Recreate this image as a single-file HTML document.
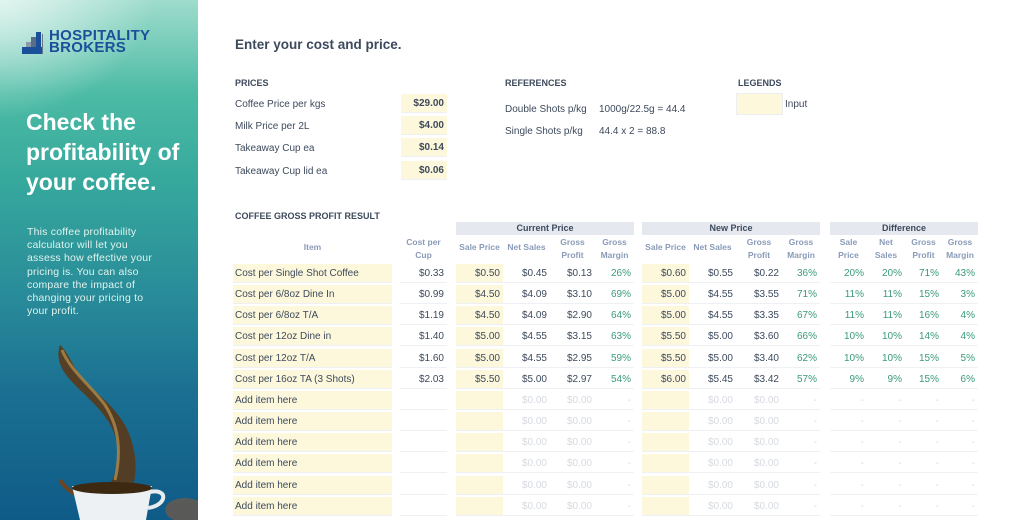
<!DOCTYPE html>
<html><head><meta charset="utf-8"><style>
*{margin:0;padding:0;box-sizing:border-box}
body{width:1024px;height:520px;overflow:hidden;background:#fff;font-family:"Liberation Sans",sans-serif;position:relative;color:#3d4a5c}
#side{position:absolute;left:0;top:0;width:198px;height:520px;background:linear-gradient(180deg,#9fdccc 0%,#4cbba5 18%,#36a89c 35%,#2a8e9a 55%,#1b7092 75%,#0f5b88 100%);overflow:hidden}
#side .hl{position:absolute;left:-80px;top:-80px;width:240px;height:200px;background:radial-gradient(ellipse at 30% 30%,rgba(240,250,247,.95),rgba(240,250,247,0) 70%)}
.logo{position:absolute;left:49px;top:30px;font-weight:bold;color:#1a4f9a;font-size:15px;line-height:12px;letter-spacing:.3px}
h1{position:absolute;left:26px;top:107px;color:#fff;font-size:23px;line-height:30px;font-weight:bold;width:172px}
.desc{position:absolute;left:27px;top:226px;color:#dff3ee;font-size:10.5px;line-height:13.2px;white-space:nowrap;letter-spacing:.2px}
.a{position:absolute;white-space:nowrap}
.t{font-size:10px}
.hd{font-size:9px;font-weight:bold;color:#3d4a5c}
.y{background:#fdf8dc}
.c{position:absolute;height:19px;line-height:19px;font-size:10px;text-align:right;padding-right:3px;border-bottom:1px solid #eef0f3}
.g{color:#3a9a7a}
.f{color:#d6dae0}
.h{position:absolute;font-size:8.5px;color:#8a9bb8;font-weight:bold;text-align:center;line-height:13px}
.gh{position:absolute;top:222px;height:13px;background:#e6e8f0;font-size:9px;font-weight:bold;text-align:center;line-height:13px;color:#3d4a5c}
</style></head><body>
<div id="side"><div class="hl"></div>
<svg style="position:absolute;left:22px;top:30px" width="26" height="26" viewBox="0 0 26 26"><rect x="14" y="2" width="5" height="22" fill="#1a4f9a"/><rect x="9" y="7" width="5" height="17" fill="#5a6d86"/><rect x="4" y="12" width="5" height="12" fill="#8c9aab"/><rect x="0" y="17" width="20" height="7" fill="#1a4f9a"/><rect x="20" y="4" width="1" height="20" fill="#6a7788"/></svg>
<div class="logo">HOSPITALITY<br>BROKERS</div>
<h1>Check the profitability of your coffee.</h1>
<div class="desc">This coffee profitability<br>calculator will let you<br>assess how effective your<br>pricing is. You can also<br>compare the impact of<br>changing your pricing to<br>your profit.</div>
<svg style="position:absolute;left:0;top:330px" width="198" height="190" viewBox="0 330 198 190">
<path d="M60 345 C55 360 62 372 75 385 C95 405 115 420 118 450 C120 470 110 485 100 500 L125 505 C140 480 138 450 125 425 C110 400 90 390 80 375 C72 365 68 352 60 345Z" fill="#5a3a1a" opacity=".9"/>
<path d="M62 350 C70 370 90 385 105 405 C118 425 122 450 115 480" stroke="#b08a4a" stroke-width="3" fill="none" opacity=".8"/>
<path d="M60 480 C70 495 85 500 100 500" stroke="#6b4420" stroke-width="4" fill="none"/>
<path d="M72 486 L152 486 L146 520 L80 520Z" fill="#eef1f3"/>
<ellipse cx="112" cy="488" rx="40" ry="6" fill="#3d2812"/>
<path d="M150 492 C168 488 168 505 148 508" stroke="#e8ecef" stroke-width="4" fill="none"/>
<ellipse cx="185" cy="510" rx="20" ry="12" fill="#6b5a4c" opacity=".8"/>
</svg>
</div>

<div class="a" style="left:235px;top:37px;font-size:13.5px;font-weight:bold">Enter your cost and price.</div>
<div class="a hd" style="left:235px;top:78px">PRICES</div>
<div class="a hd" style="left:505px;top:78px">REFERENCES</div>
<div class="a hd" style="left:738px;top:78px">LEGENDS</div>
<div class="a t" style="left:235px;top:99px">Coffee Price per kgs</div>
<div class="a t" style="left:235px;top:121px">Milk Price per 2L</div>
<div class="a t" style="left:235px;top:143px">Takeaway Cup ea</div>
<div class="a t" style="left:235px;top:166px">Takeaway Cup lid ea</div>
<div class="c y" style="left:401px;top:94px;width:46px;font-weight:bold">$29.00</div>
<div class="c y" style="left:401px;top:116px;width:46px;font-weight:bold">$4.00</div>
<div class="c y" style="left:401px;top:138px;width:46px;font-weight:bold">$0.14</div>
<div class="c y" style="left:401px;top:161px;width:46px;font-weight:bold">$0.06</div>
<div class="a t" style="left:505px;top:104px">Double Shots p/kg</div>
<div class="a t" style="left:599px;top:104px">1000g/22.5g = 44.4</div>
<div class="a t" style="left:505px;top:126px">Single Shots p/kg</div>
<div class="a t" style="left:599px;top:126px">44.4 x 2 = 88.8</div>
<div class="a y" style="left:736px;top:93px;width:47px;height:22px;border:1px solid #eee"></div>
<div class="a t" style="left:785px;top:99px">Input</div>

<div class="a hd" style="left:235px;top:211px">COFFEE GROSS PROFIT RESULT</div>
<div class="gh" style="left:456px;width:178px">Current Price</div>
<div class="gh" style="left:642px;width:178px">New Price</div>
<div class="gh" style="left:830px;width:148px">Difference</div>
<div class="h" style="left:233px;top:241px;width:159px">Item</div>
<div class="h" style="left:400px;top:236px;width:47px">Cost per<br>Cup</div>
<div class="h" style="left:456px;top:241px;width:47px">Sale Price</div>
<div class="h" style="left:503px;top:241px;width:47px">Net Sales</div>
<div class="h" style="left:550px;top:236px;width:45px">Gross<br>Profit</div>
<div class="h" style="left:595px;top:236px;width:39px">Gross<br>Margin</div>
<div class="h" style="left:642px;top:241px;width:47px">Sale Price</div>
<div class="h" style="left:689px;top:241px;width:47px">Net Sales</div>
<div class="h" style="left:736px;top:236px;width:46px">Gross<br>Profit</div>
<div class="h" style="left:782px;top:236px;width:38px">Gross<br>Margin</div>
<div class="h" style="left:830px;top:236px;width:37px">Sale<br>Price</div>
<div class="h" style="left:867px;top:236px;width:38px">Net<br>Sales</div>
<div class="h" style="left:905px;top:236px;width:37px">Gross<br>Profit</div>
<div class="h" style="left:942px;top:236px;width:36px">Gross<br>Margin</div>

<div id="rows"></div>
<script>
(function(){
var L=[[233,159],[400,47],[456,47],[503,47],[550,45],[595,39],[642,47],[689,47],[736,46],[782,38],[830,37],[867,38],[905,37],[942,36]];
var D=[["Cost per Single Shot Coffee","$0.33","$0.50","$0.45","$0.13","26%","$0.60","$0.55","$0.22","36%","20%","20%","71%","43%"],
["Cost per 6/8oz Dine In","$0.99","$4.50","$4.09","$3.10","69%","$5.00","$4.55","$3.55","71%","11%","11%","15%","3%"],
["Cost per 6/8oz T/A","$1.19","$4.50","$4.09","$2.90","64%","$5.00","$4.55","$3.35","67%","11%","11%","16%","4%"],
["Cost per 12oz Dine in","$1.40","$5.00","$4.55","$3.15","63%","$5.50","$5.00","$3.60","66%","10%","10%","14%","4%"],
["Cost per 12oz T/A","$1.60","$5.00","$4.55","$2.95","59%","$5.50","$5.00","$3.40","62%","10%","10%","15%","5%"],
["Cost per 16oz TA (3 Shots)","$2.03","$5.50","$5.00","$2.97","54%","$6.00","$5.45","$3.42","57%","9%","9%","15%","6%"]];
for(var i=0;i<6;i++)D.push(["Add item here","","","$0.00","$0.00","-","","$0.00","$0.00","-","-","-","-","-"]);
var h="";
for(var r=0;r<12;r++){var yy=Math.round(264+21.15*r);
for(var c=0;c<14;c++){var v=D[r][c],cl="c";
if(c==0||c==2||c==6)cl+=" y";
if(r>=6&&c>2&&c!=6)cl+=" f";else if(c==5||c==9||c>=10)cl+=" g";
var st="left:"+L[c][0]+"px;top:"+yy+"px;width:"+L[c][1]+"px;";
if(c==0)st+="text-align:left;padding-left:2px;";
h+='<div class="'+cl+'" style="'+st+'">'+v+'</div>';}}
document.getElementById("rows").innerHTML=h;
})();
</script>
</body></html>
